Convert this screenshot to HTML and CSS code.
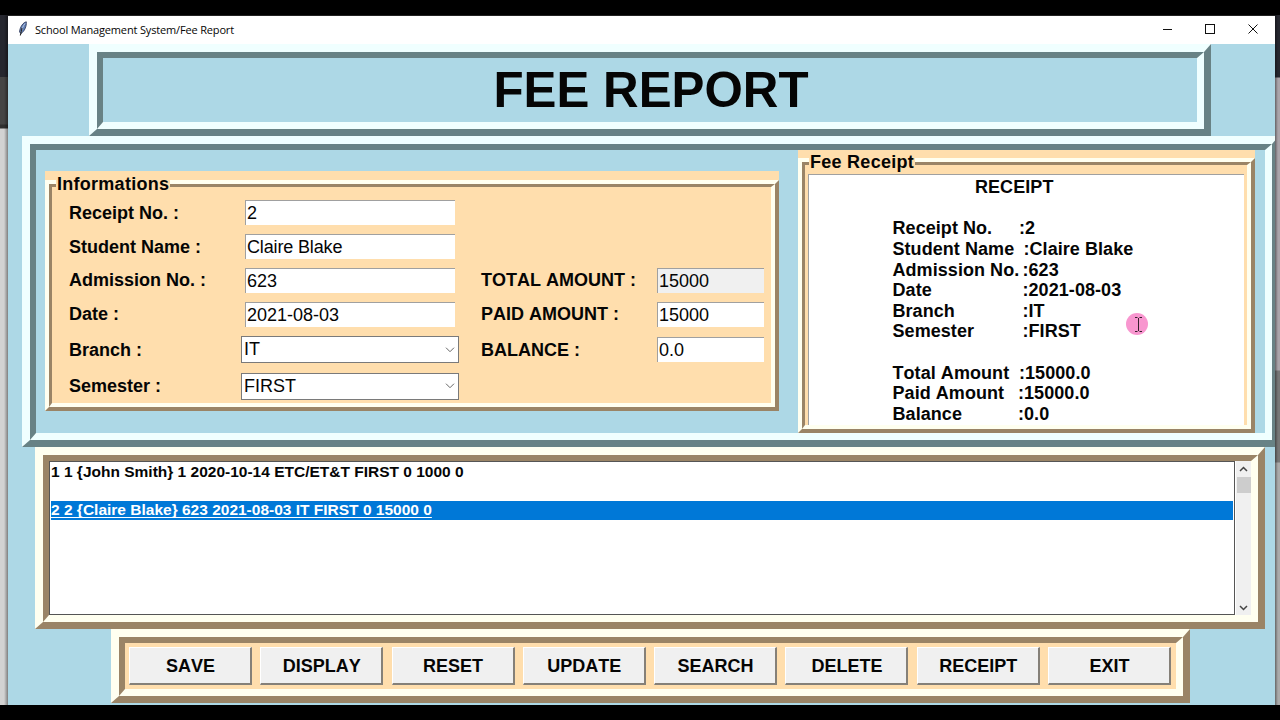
FILE: index.html
```html
<!DOCTYPE html>
<html lang="en">
<head>
<meta charset="utf-8">
<title>School Management System/Fee Report</title>
<link rel="stylesheet" href="styles.css">
</head>
<body>
<div class="desktop">
  <div class="edge edge-left"></div>
  <div class="window">
    <header class="titlebar">
      <svg class="feather" width="10" height="16" viewBox="0 0 10 16"><path d="M8.3.8C5.300 1.500 2 5.500 1.500 11L3 12.500C6.500 10.500 8.800 5 8.300.8Z" fill="#5f7db4" stroke="#2b3658" stroke-width=".8"/><path d="M7 2.500C5 5 4 8 3 11" fill="none" stroke="#b9c9e4"/><path d="M4 7L2.300 14.500" stroke="#222" stroke-width="1.100"/></svg>
      <span class="caption">School Management System/Fee Report</span>
      <svg class="controls" width="92" height="12" viewBox="0 0 92 12" fill="none" stroke="#111"><path d="M0 6.500H9"/><rect x="42.500" y="1.500" width="9" height="9"/><path d="M85.500 1.500L94.500 10.500M94.500 1.500L85.500 10.500"/></svg>
    </header>
    <main class="content">
      <div class="ridge blue heading"><div class="ridge-in"><h1>FEE REPORT</h1></div></div>
      <div class="ridge blue details"><div class="ridge-in details-row">
        <section class="group info">
          <h2 class="legend">Informations</h2>
          <div class="ridge slim"><div class="ridge-in form">
            <label>Receipt No. :</label><div class="entry">2</div><i></i><i></i>
            <label>Student Name :</label><div class="entry name">Claire Blake</div><i></i><i></i>
            <label>Admission No. :</label><div class="entry">623</div><label class="wide">TOTAL AMOUNT :</label><div class="entry short readonly">15000</div>
            <label>Date :</label><div class="entry">2021-08-03</div><label class="wide">PAID AMOUNT :</label><div class="entry short">15000</div>
            <label>Branch :</label><div class="combo">IT<svg width="10" height="6" viewBox="0 0 10 6"><path d="M1 .7L5 4.700L9 .7" fill="none" stroke="#666"/></svg></div><label class="wide">BALANCE :</label><div class="entry short">0.0</div>
            <label>Semester :</label><div class="combo">FIRST<svg width="10" height="6" viewBox="0 0 10 6"><path d="M1 .7L5 4.700L9 .7" fill="none" stroke="#666"/></svg></div><i></i><i></i>
          </div></div>
        </section>
        <section class="group receipt">
          <h2 class="legend">Fee Receipt</h2>
          <div class="ridge slim"><div class="ridge-in"><div class="paper">
            <p class="paper-title">RECEIPT</p>
            <p></p>
            <p><b class="k1">Receipt No.</b>:2</p>
            <p><b class="k3">Student Name</b>:Claire Blake</p>
            <p><b class="k2">Admission No.</b>:623</p>
            <p><b class="k2">Date</b>:2021-08-03</p>
            <p><b class="k2">Branch</b>:IT</p>
            <p><b class="k2">Semester</b>:FIRST</p>
            <p></p>
            <p><b class="k1">Total Amount</b>:15000.0</p>
            <p><b class="k0">Paid Amount</b>:15000.0</p>
            <p><b class="k0">Balance</b>:0.0</p>
          </div></div></div>
        </section>
      </div></div>
      <div class="ridge tan records"><div class="ridge-in records-row">
        <div class="listbox">
          <div class="item">1 1 {John Smith} 1 2020-10-14 ETC/ET&amp;T FIRST 0 1000 0</div>
          <div class="item"></div>
          <div class="item selected"><span>2 2 {Claire Blake} 623 2021-08-03 IT FIRST 0 15000 0</span></div>
        </div>
        <div class="scrollbar">
          <svg width="9" height="6" viewBox="0 0 9 6"><path d="M1 5L4.500 1.500L8 5" fill="none" stroke="#444" stroke-width="1.500"/></svg>
          <div class="thumb"></div>
          <svg class="down" width="9" height="6" viewBox="0 0 9 6"><path d="M1 1L4.500 4.500L8 1" fill="none" stroke="#444" stroke-width="1.500"/></svg>
        </div>
      </div></div>
      <div class="ridge tan actions"><div class="ridge-in actions-row">
        <button>SAVE</button><button>DISPLAY</button><button>RESET</button><button>UPDATE</button><button>SEARCH</button><button>DELETE</button><button>RECEIPT</button><button>EXIT</button>
      </div></div>
    </main>
  </div>
  <div class="edge edge-right"></div>
  <svg class="pointer" width="24" height="24" viewBox="0 0 24 24"><circle cx="12" cy="12" r="11" fill="#f896cf"/><path d="M10 5.500H12.500M14.500 5.500H17M13.500 6V19M10 19.500H12.500M14.500 19.500H17" fill="none" stroke="#35202c"/></svg>
</div>
</body>
</html>
```

FILE: styles.css
```css
* { box-sizing: border-box; }
body { margin: 0; background: #000; font-family: "Liberation Sans", Arial, sans-serif; color: #050505; font-kerning: none; }
h1, h2, p { margin: 0; }

.desktop { position: relative; width: 1280px; height: 720px; padding: 15px 0; display: flex; overflow: hidden; }
.edge-left { width: 8px; background: linear-gradient(to right, transparent 4px, #0006), linear-gradient(#26272f 62px, #454545 62px, #454545 109px, #303030 110px, #303030 113px, #d2d2d2 114px); }
.edge-right { width: 5px; background: linear-gradient(to left, transparent 2px, #0006), linear-gradient(#26272f 62px, #aaa4aa 63px, #aaa4aa 355px, #777 356px, #777 447px, #aaa 448px); }
.window { width: 1267px; height: 690px; overflow: hidden; border-top: 1px solid #222; background: #add8e6; }

.titlebar { height: 28px; background: #fff; display: flex; align-items: center; padding: 0 16px 2px 10px; }
.feather { margin-top: -1px; }
.caption { margin-left: 7px; font: 11px "Open Sans", "Noto Sans", sans-serif; letter-spacing: -.16px; white-space: nowrap; }
.controls { margin-left: auto; overflow: visible; margin-right: 4px; }

.content { height: 661px; display: flex; flex-direction: column; }
.ridge { flex: none; border-style: solid; border-width: 8px 7px 7px 8px; border-color: #f0ffff #688285 #688285 #f0ffff; }
.ridge-in { height: 100%; border-style: solid; border-width: 6px 7px 7px 6px; border-color: #688285 #f0ffff #f0ffff #688285; }
.tan { background: #ffdead; }
.tan, .slim { border-color: #fffff0 #9a8466 #9a8466 #fffff0; }
.tan > .ridge-in, .slim > .ridge-in { border-color: #9a8466 #fffff0 #fffff0 #9a8466; }
.slim { border-width: 4px; }
.slim > .ridge-in { border-width: 3px 4px 4px 3px; }

.heading { width: 1122px; height: 92px; margin-left: 81px; }
h1 { font-size: 49.300px; line-height: 64px; text-align: center; padding-left: 2px; }

.details { width: 1257px; height: 311px; margin-left: 14px; }
.details-row { display: flex; align-items: flex-start; padding-left: 9px; }
.group { position: relative; flex: none; background: #ffdead; font-size: 18px; }
.legend { position: absolute; background: #ffdead; font-size: 18px; line-height: 20px; letter-spacing: .27px; white-space: nowrap; }
.info { width: 734px; margin-top: 21px; padding-top: 9px; }
.info .legend { left: 11px; top: 3px; padding: 0 1px; }
.info .ridge { height: 231px; }
.form { display: grid; grid-template-columns: 172px 240px 172px 130px; grid-template-rows: 33.800px 33.800px 33.800px 33.800px 37px 36.500px; align-items: center; padding: 9px 0 0 17px; }
.form label { font-weight: bold; white-space: nowrap; padding-top: 1px; }
.entry { width: 210px; height: 25px; margin-left: 4px; padding-left: 1px; line-height: 25px; background: #fff; border: solid #a0a0a0; border-width: 1px 0 0 1px; white-space: nowrap; }
.entry.name { letter-spacing: -.15px; }
.entry.short { width: 107px; margin-left: 4px; }
.entry.readonly { background: #f0f0f0; }
.combo { width: 218px; height: 27px; display: flex; align-items: center; justify-content: space-between; padding: 0 3px 0 2px; background: #fff; border: 1px solid #7a7a7a; }

.receipt { width: 457px; margin-left: 19px; padding-top: 8px; }
.receipt .legend { left: 11px; top: 2px; padding: 0 1px; }
.receipt .ridge { height: 275px; }
.receipt .ridge-in { padding: 9px 3px 0; }
.paper { height: 251px; background: #fff; border: solid #a0a0a0; border-width: 1px 0 0 1px; padding-top: 2px; font-weight: bold; }
.paper p { height: 20.640px; line-height: 20.640px; padding-left: 83.500px; white-space: nowrap; letter-spacing: .06px; }
.paper .paper-title { padding-left: 166px; }
.paper b { display: inline-block; }
.k0 { width: 125.500px; }
.k1 { width: 126.500px; }
.k2 { width: 130px; }
.k3 { width: 131px; }

.records { width: 1230px; height: 182px; margin-left: 27px; }
.records-row { display: flex; background: #fff; }
.listbox { width: 1186px; height: 154px; border: 1px solid #555; padding: 0 1px; background: #fff; font-size: 15.500px; font-weight: bold; }
.item { height: 19px; line-height: 19px; white-space: nowrap; }
.selected { height: 19px; margin-top: 1px; line-height: 18px; background: #0078d7; color: #fff; }
.selected span { text-decoration: underline; text-decoration-thickness: 1px; text-underline-offset: 2px; text-decoration-skip-ink: none; }
.scrollbar { width: 15px; margin-left: 1px; padding: 5px 0 4px; background: #f0f0f0; display: flex; flex-direction: column; align-items: center; }
.thumb { width: 14px; height: 16px; margin-top: 5px; background: #cdcdcd; }
.down { margin-top: auto; }

.actions { width: 1079px; height: 74px; margin-left: 103px; }
.actions-row { display: flex; justify-content: space-between; padding: 4px 5px 4px 4px; }
button { width: 123px; height: 38px; padding: 2px 0 0 1px; border: solid; border-width: 1px 2px 2px 1px; border-color: #fff #858078 #858078 #fff; background: #f0f0f0; font: bold 18px "Liberation Sans", Arial, sans-serif; font-kerning: none; color: #050505; }

.pointer { position: absolute; left: 1125px; top: 312px; }
```
